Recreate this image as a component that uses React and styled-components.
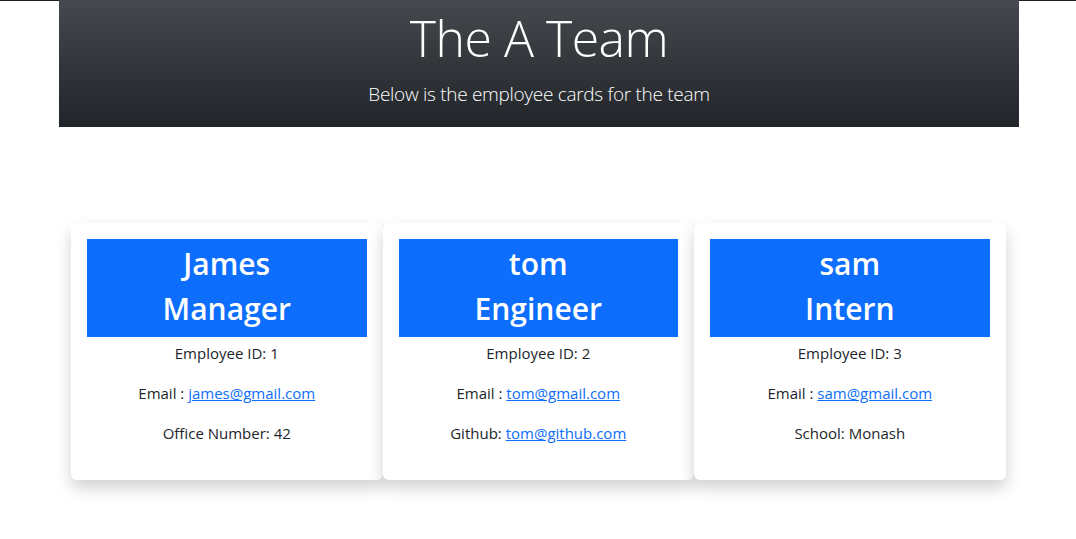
import React from 'react'
import styled, { createGlobalStyle } from 'styled-components'

const team = [
  { name: 'James', role: 'Manager', id: 1, email: 'james@gmail.com', extra: { label: 'Office Number', value: '42' } },
  { name: 'tom', role: 'Engineer', id: 2, email: 'tom@gmail.com', extra: { label: 'Github', value: 'tom@github.com', link: true } },
  { name: 'sam', role: 'Intern', id: 3, email: 'sam@gmail.com', extra: { label: 'School', value: 'Monash' } },
]

export default function App() {
  return (
    <>
      <GlobalStyle />
      <TopLine />
      <Container>
        <Jumbo>
          <Title>The A Team</Title>
          <Lead>Below is the employee cards for the team</Lead>
        </Jumbo>
        <Row>
          {team.map((e) => (
            <Card key={e.id}>
              <CardHead>
                {e.name}
                <br />
                {e.role}
              </CardHead>
              <Info>Employee ID: {e.id}</Info>
              <Info>
                Email : <Link href={`mailto:${e.email}`}>{e.email}</Link>
              </Info>
              <Info>
                {e.extra.label}:{' '}
                {e.extra.link ? <Link href="#">{e.extra.value}</Link> : e.extra.value}
              </Info>
            </Card>
          ))}
        </Row>
      </Container>
    </>
  )
}

const GlobalStyle = createGlobalStyle`
  body {
    margin: 0;
    background: #fff;
    color: #212529;
    font-family: "Open Sans", "Noto Sans", sans-serif;
    font-size: 16px;
    line-height: 1.5;
  }
`
const TopLine = styled.div`
  height: 1px;
  background: #1b1d22;
`
const Container = styled.div`
  width: 960px;
  margin: -1px auto 0;
  position: relative;
  left: 1px;
  padding-bottom: 40px;
`
const Jumbo = styled.header`
  height: 127px;
  background: linear-gradient(180deg, #45484c 0%, #212529 100%);
  color: #fff;
  text-align: center;
  padding-top: 8px;
  box-sizing: border-box;
`
const Title = styled.h1`
  margin: 0;
  font-weight: 300;
  font-size: 50px;
  line-height: 1.2;
  letter-spacing: -0.5px;
`
const Lead = styled.p`
  margin: 12px 0 0;
  font-weight: 300;
  font-size: 19px;
  line-height: 1.5;
  letter-spacing: -0.3px;
`
const Row = styled.div`
  display: flex;
  padding: 96px 12px 0;
`
const Card = styled.section`
  width: 311.5px;
  background: #fff;
  border-radius: 6px;
  box-shadow: 0 8px 16px rgba(0, 0, 0, 0.18);
  padding: 16px 16px 19px;
  box-sizing: border-box;
  text-align: center;
`
const CardHead = styled.h2`
  margin: 0;
  background: #0d6efd;
  color: #fff;
  font-size: 30px;
  font-weight: 600;
  line-height: 45px;
  padding: 2px 0 6px;
`
const Info = styled.p`
  margin: 4px 0 16px;
  font-size: 15px;
  line-height: 24px;
  & + & {
    margin-top: 0;
  }
`
const Link = styled.a`
  color: #0d6efd;
  text-decoration: underline;
`
